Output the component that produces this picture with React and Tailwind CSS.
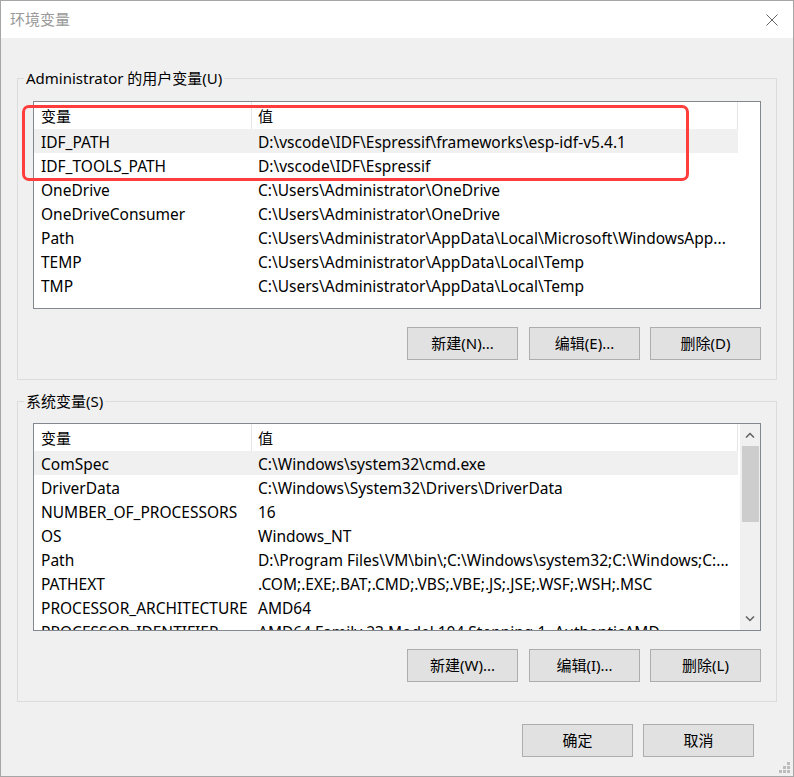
import React from "react";

const userVars = [
  ["IDF_PATH", "D:\\vscode\\IDF\\Espressif\\frameworks\\esp-idf-v5.4.1"],
  ["IDF_TOOLS_PATH", "D:\\vscode\\IDF\\Espressif"],
  ["OneDrive", "C:\\Users\\Administrator\\OneDrive"],
  ["OneDriveConsumer", "C:\\Users\\Administrator\\OneDrive"],
  ["Path", "C:\\Users\\Administrator\\AppData\\Local\\Microsoft\\WindowsApp..."],
  ["TEMP", "C:\\Users\\Administrator\\AppData\\Local\\Temp"],
  ["TMP", "C:\\Users\\Administrator\\AppData\\Local\\Temp"],
];

const sysVars = [
  ["ComSpec", "C:\\Windows\\system32\\cmd.exe"],
  ["DriverData", "C:\\Windows\\System32\\Drivers\\DriverData"],
  ["NUMBER_OF_PROCESSORS", "16"],
  ["OS", "Windows_NT"],
  ["Path", "D:\\Program Files\\VM\\bin\\;C:\\Windows\\system32;C:\\Windows;C:..."],
  ["PATHEXT", ".COM;.EXE;.BAT;.CMD;.VBS;.VBE;.JS;.JSE;.WSF;.WSH;.MSC"],
  ["PROCESSOR_ARCHITECTURE", "AMD64"],
  ["PROCESSOR_IDENTIFIER", "AMD64 Family 23 Model 104 Stepping 1, AuthenticAMD"],
];

const Btn = ({ children, className = "" }) => (
  <button
    className={
      "h-[33px] w-[111px] bg-[#e1e1e1] border border-[#adadad] text-[15px] text-black flex items-center justify-center " +
      className
    }
  >
    {children}
  </button>
);

const Scrollbar = () => (
  <div className="w-[20px] bg-[#f0f0f0] flex flex-col items-center shrink-0">
    <div className="h-[22px] w-full flex items-center justify-center">
      <svg width="10" height="6" viewBox="0 0 10 6">
        <path d="M1 5.5 L5 1.5 L9 5.5" fill="none" stroke="#606060" strokeWidth="1.5" />
      </svg>
    </div>
    <div className="w-[17px] h-[76px] bg-[#cdcdcd]"></div>
    <div className="flex-1"></div>
    <div className="h-[22px] w-full flex items-center justify-center">
      <svg width="10" height="6" viewBox="0 0 10 6">
        <path d="M1 0.5 L5 4.5 L9 0.5" fill="none" stroke="#606060" strokeWidth="1.5" />
      </svg>
    </div>
  </div>
);

const ListView = ({ rows, scroll, children }) => (
  <div className="relative h-[208px] border border-[#828790] bg-white flex">
    <div className="flex-1 overflow-hidden">
      <div className="w-[704px]">
        {/* header */}
        <div className="flex h-[27px]">
          <div className="w-[218px] flex items-center pl-[7px] pt-[2px] border-r border-[#e5e5e5]">变量</div>
          <div className="w-[486px] flex items-center pl-[6px] pt-[2px] border-r border-[#e5e5e5]">值</div>
        </div>
        {rows.map(([k, v], i) => (
          <div
            key={k + i}
            className={"flex h-[24px] items-center pt-[3px] text-[15.5px] " + (i === 0 ? "bg-[#f0f0f0]" : "")}
          >
            <div className="w-[217px] pl-[7px] whitespace-nowrap overflow-hidden">{k}</div>
            <div className="flex-1 pl-[7px] whitespace-nowrap overflow-hidden">{v}</div>
          </div>
        ))}
      </div>
    </div>
    {scroll && <Scrollbar />}
    {children}
  </div>
);

const Group = ({ title, className = "", padTop = "pt-[14px]", children }) => (
  <fieldset className={"border border-[#dcdcdc] " + className}>
    <legend className="ml-[6px] px-[2px] leading-[18px] text-[15px] text-black">{title}</legend>
    <div className={"px-[15px] pb-[19px] " + padTop}>{children}</div>
  </fieldset>
);

export default function App() {
  return (
    <div className="w-[794px] h-[777px] border border-[#a6a6a6] bg-[#f0f0f0] flex flex-col relative overflow-hidden text-[15px] text-black font-['Noto_Sans','Noto_Sans_CJK_SC',sans-serif]">
      {/* title bar */}
      <div className="h-[37px] bg-white flex items-center justify-between pl-[9px] pr-[15px] shrink-0">
        <span className="text-[15px] text-[#999999]">环境变量</span>
        <svg width="12" height="12" viewBox="0 0 12 12">
          <path d="M0.5 0.5 L11.5 11.5 M11.5 0.5 L0.5 11.5" stroke="#666" strokeWidth="1" />
        </svg>
      </div>

      <div className="flex-1 px-[16px] flex flex-col">
        <Group title="Administrator 的用户变量(U)" className="mt-[31px]">
          <ListView rows={userVars}>
            {/* red highlight */}
            <div className="absolute left-[-12px] top-[3px] w-[667px] h-[76px] border-[3px] border-[#ff3d3d] rounded-[7px]"></div>
          </ListView>
          <div className="flex justify-end mt-[18px]">
            <Btn>新建(N)...</Btn>
            <Btn className="ml-[11px]">编辑(E)...</Btn>
            <Btn className="ml-[10px]">删除(D)</Btn>
          </div>
        </Group>

        <Group title="系统变量(S)" className="mt-[12px]" padTop="pt-[13px]">
          <ListView rows={sysVars} scroll />
          <div className="flex justify-end mt-[18px]">
            <Btn>新建(W)...</Btn>
            <Btn className="ml-[11px]">编辑(I)...</Btn>
            <Btn className="ml-[10px]">删除(L)</Btn>
          </div>
        </Group>

        <div className="flex justify-end mt-[22px] mr-[23px]">
          <Btn>确定</Btn>
          <Btn className="ml-[10px]">取消</Btn>
        </div>
      </div>

      {/* resize grip */}
      <svg className="absolute right-[2px] bottom-[2px]" width="12" height="12" viewBox="0 0 12 12">
        <rect x="8" y="0" width="3" height="3" fill="#bcbcbc" />
        <rect x="4" y="4" width="3" height="3" fill="#bcbcbc" />
        <rect x="8" y="4" width="3" height="3" fill="#bcbcbc" />
        <rect x="0" y="8" width="3" height="3" fill="#bcbcbc" />
        <rect x="4" y="8" width="3" height="3" fill="#bcbcbc" />
        <rect x="8" y="8" width="3" height="3" fill="#bcbcbc" />
      </svg>
    </div>
  );
}
